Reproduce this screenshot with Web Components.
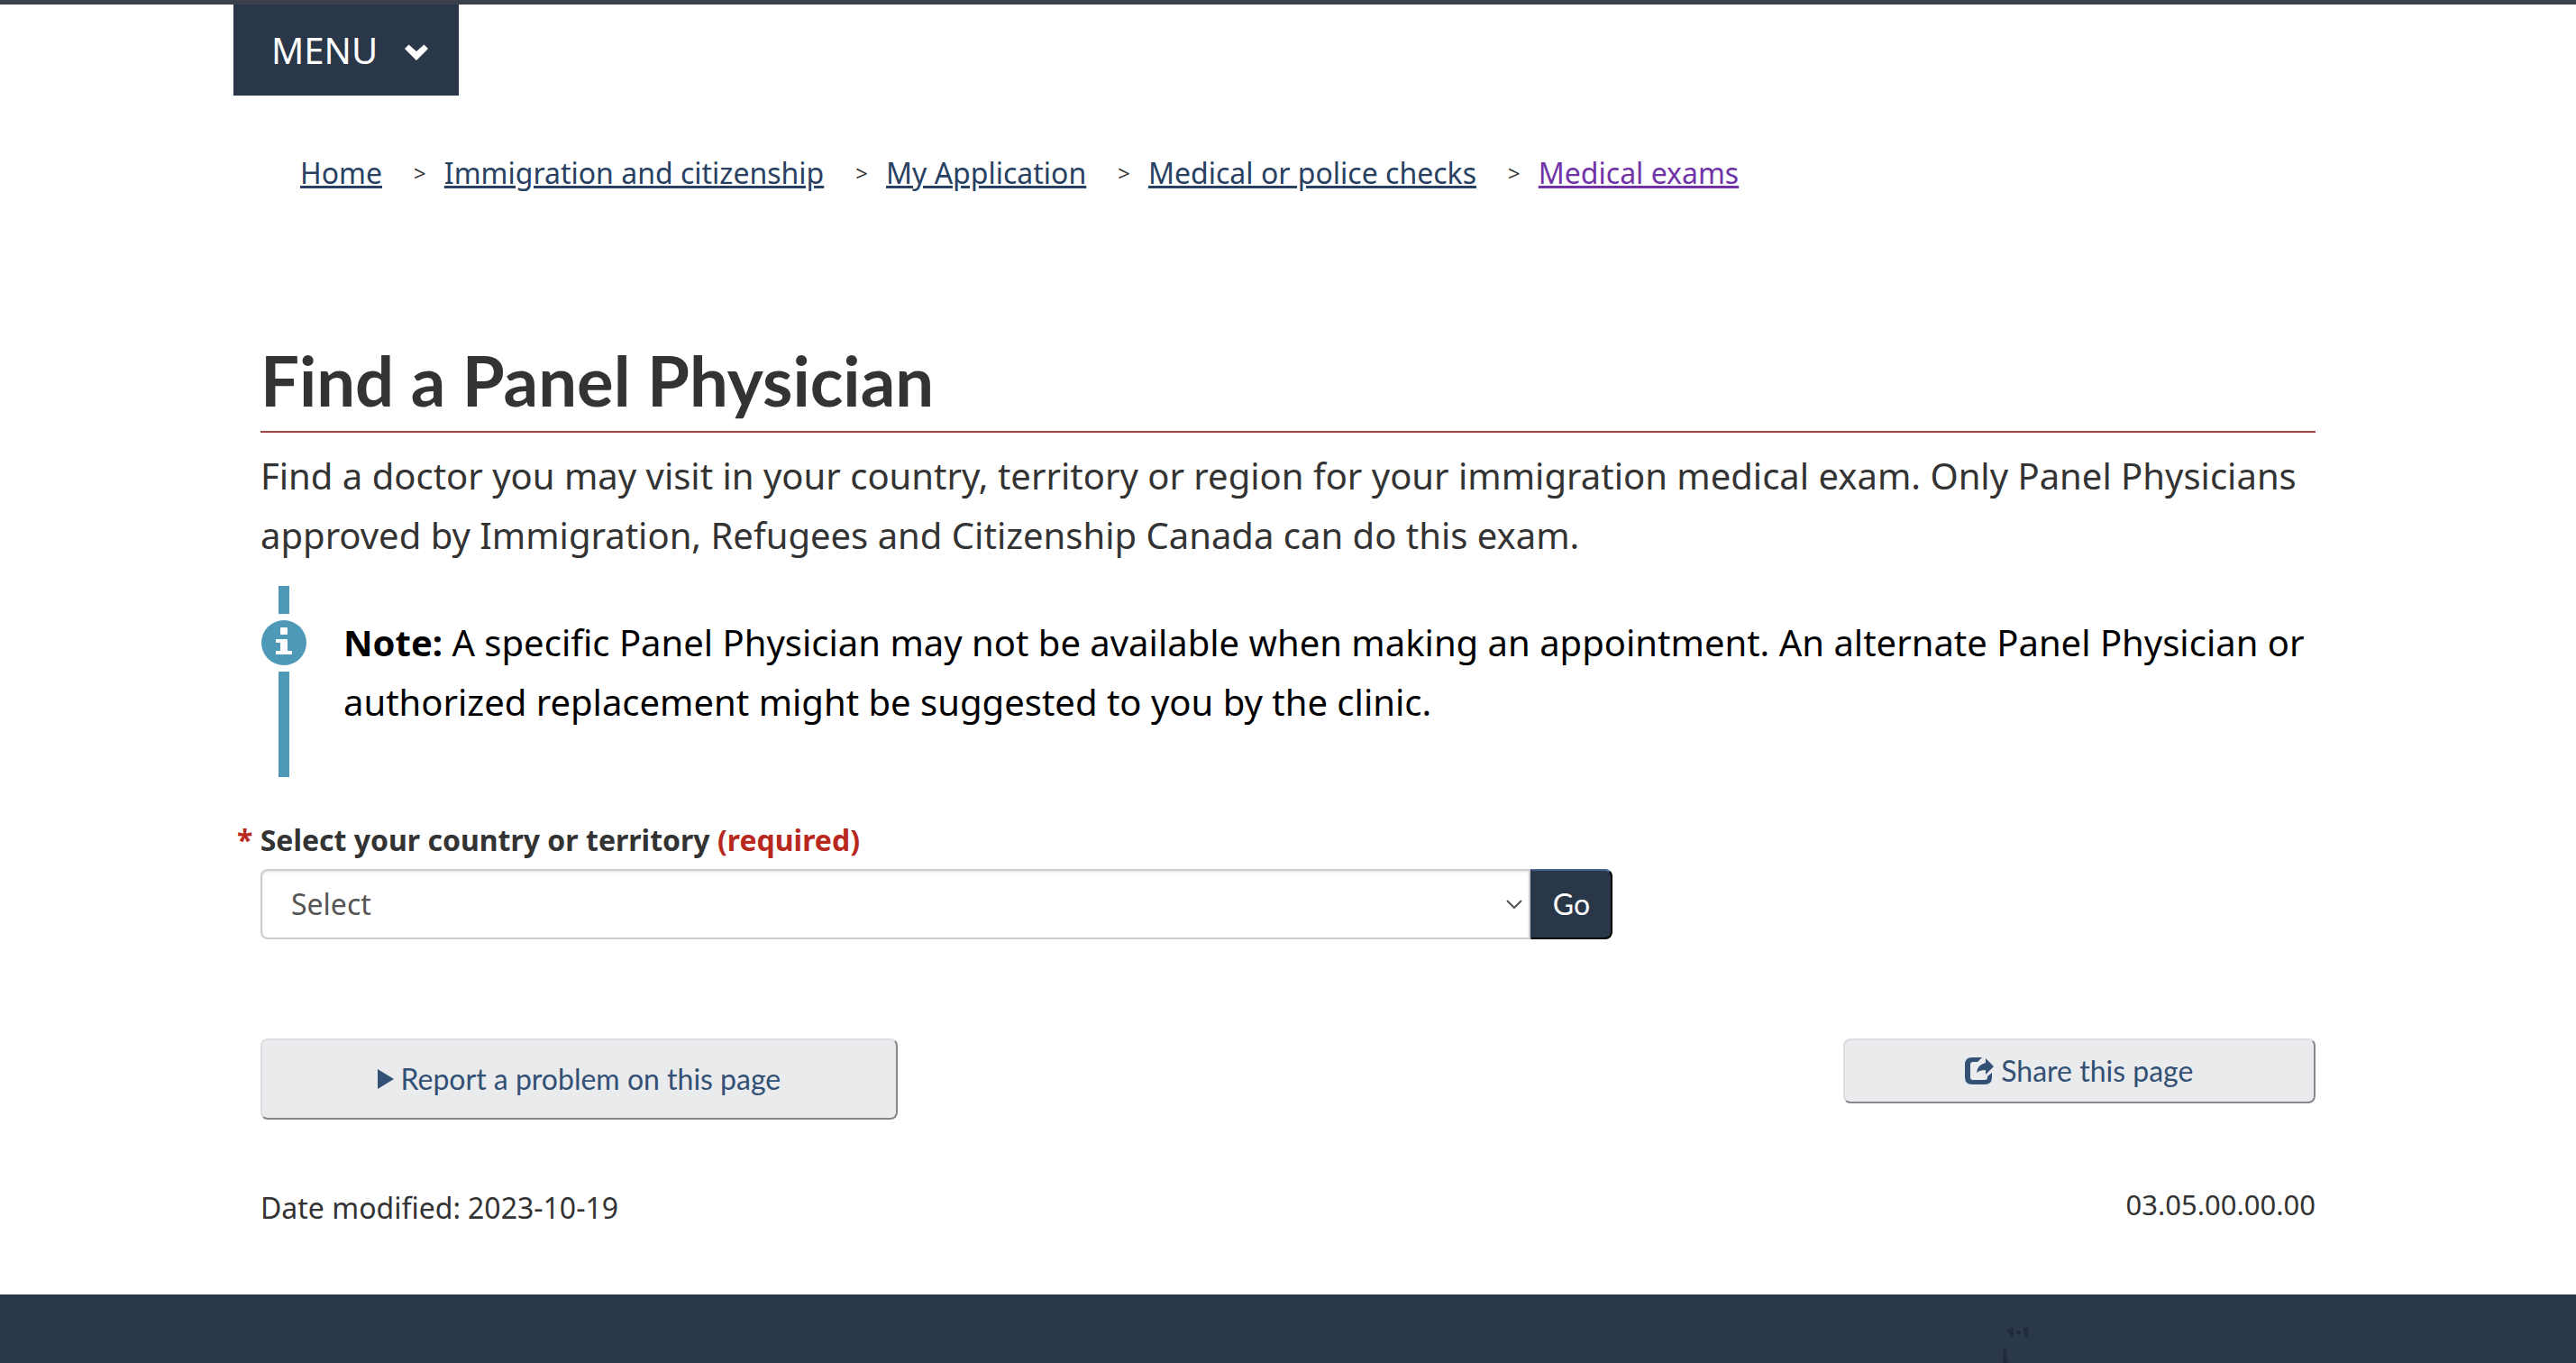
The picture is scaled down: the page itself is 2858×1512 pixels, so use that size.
<!DOCTYPE html>
<html lang="en">
<head>
<meta charset="utf-8">
<title>Find a Panel Physician</title>
<style>
  html { height: 100%; }
  body {
    margin: 0;
    min-height: 100%;
    background: #fff;
    color: #333;
    font: 40px/66px "Noto Sans", sans-serif;
    display: flex;
    flex-direction: column;
    overflow-x: hidden;
  }
</style>
</head>
<body>
<site-menu>MENU</site-menu>
<bread-crumbs>
  <crumb-item>Home</crumb-item>
  <crumb-item>Immigration and citizenship</crumb-item>
  <crumb-item>My Application</crumb-item>
  <crumb-item>Medical or police checks</crumb-item>
  <crumb-item visited>Medical exams</crumb-item>
</bread-crumbs>
<page-main>
  <page-title>Find a Panel Physician</page-title>
  <lead-text>Find a doctor you may visit in your country, territory or region for your immigration medical exam. Only Panel Physicians approved by Immigration, Refugees and Citizenship Canada can do this exam.</lead-text>
  <info-note><strong>Note:</strong> A specific Panel Physician may not be available when making an appointment. An alternate Panel Physician or authorized replacement might be suggested to you by the clinic.</info-note>
  <country-form></country-form>
  <page-details></page-details>
</page-main>
<site-footer></site-footer>

<script>
const define = (name, html) => {
  const template = document.createElement('template');
  template.innerHTML = '<style>*{box-sizing:border-box}</style>' + html;
  customElements.define(name, class extends HTMLElement {
    constructor() {
      super();
      this.attachShadow({ mode: 'open' }).append(template.content.cloneNode(true));
    }
  });
};

define('site-menu', `
  <style>
    :host { display: block; border-top: 5px solid #3c404b; }
    nav { max-width: 2340px; margin: 0 auto; }
    button {
      display: flex; align-items: center; gap: 30px;
      height: 101px; padding: 0 34px 0 42px;
      border: 0; background: #2a3748; color: #fff;
      font: 40px/66px "Noto Sans", sans-serif;
    }
    svg { width: 26px; height: 18px; margin-top: 4px; }
  </style>
  <nav aria-label="Main">
    <button type="button" aria-haspopup="true"><slot></slot>
      <svg viewBox="0 0 26 18" aria-hidden="true"><path fill="#fff" d="M4.500 0.500 13 8 21.500 0.500 26 5 13 18 0 5z"/></svg>
    </button>
  </nav>`);

define('bread-crumbs', `
  <style>
    :host { display: block; }
    nav {
      display: flex; flex-wrap: wrap; align-items: center;
      max-width: 2340px; margin: 0 auto; padding: 58px 74px 0;
    }
  </style>
  <nav aria-label="Breadcrumb"><slot></slot></nav>`);

define('crumb-item', `
  <style>
    :host { display: flex; align-items: center; font-size: 32px; line-height: 56px; }
    a { color: #284162; text-decoration: underline; }
    :host([visited]) a { color: #7034a8; }
    span { font-size: 24px; padding: 0 20px 0 35px; }
    :host(:first-child) span { display: none; }
  </style>
  <span aria-hidden="true">&gt;</span><a href="#"><slot></slot></a>`);

define('page-main', `
  <style>
    :host { display: block; }
    main { max-width: 2340px; margin: 0 auto; padding: 156px 30px 70px; }
  </style>
  <main><slot></slot></main>`);

define('page-title', `
  <style>
    :host { display: block; }
    h1 {
      margin: 0 0 15px; padding-bottom: 10px;
      border-bottom: 2px solid #9c4547;
      font: 700 76px/92px Lato, sans-serif;
    }
  </style>
  <h1><slot></slot></h1>`);

define('lead-text', `
  <style>
    :host { display: block; }
    p { margin: 0; }
  </style>
  <p><slot></slot></p>`);

define('info-note', `
  <style>
    :host { display: flex; gap: 40px; margin-top: 23px; color: #000; }
    .rail { display: flex; flex-direction: column; align-items: center; gap: 7px; flex: none; width: 52px; }
    .rail i { width: 12px; height: 31px; background: #4e98b8; }
    .rail i:last-child { height: auto; flex: 1; }
    svg { width: 50px; height: 50px; flex: none; }
    p { margin: 0; padding: 30px 0 50px; }
  </style>
  <div class="rail"><i></i>
    <svg viewBox="0 0 50 50" aria-hidden="true"><circle cx="25" cy="25" r="25" fill="#4e98b8"/><path fill="#fff" d="M22 8h6q1 0 1 1v6q0 1-1 1h-6q-1 0-1-1V9q0-1 1-1zM17 21h11q1 0 1 1v12h4q1 0 1 1v3H17q-1 0-1-1v-3h5v-9h-4q-1 0-1-1v-2q0-1 1-1z"/></svg>
  <i></i></div>
  <p><slot></slot></p>`);

define('country-form', `
  <style>
    :host { display: block; margin-top: 44px; }
    label { display: block; margin-left: -26px; font-size: 32px; font-weight: 700; line-height: 52px; }
    .req { color: #b9281e; }
    .group { display: flex; width: 1500px; max-width: 100%; height: 78px; margin-top: 6px; }
    .field { display: grid; flex: 1; align-items: center; }
    .field > * { grid-area: 1 / 1; }
    select {
      appearance: none; width: 100%; height: 78px; padding: 0 32px;
      border: 2px solid #ccc; border-radius: 8px 0 0 8px; background: #fff;
      box-shadow: inset 0 2px 2px rgba(0,0,0,.08);
      color: #555; font: 32px/52px "Noto Sans", sans-serif;
    }
    svg { justify-self: end; width: 18px; height: 11px; margin-right: 9px; pointer-events: none; }
    button {
      width: 91px; padding: 0; border: 2px solid #000; border-top-color: #486591; border-left-color: #2a3748;
      border-radius: 0 8px 8px 0; background: #2a3748; color: #fff;
      font: 32px/52px Lato, sans-serif;
    }
  </style>
  <form>
    <label for="country"><span class="req">*</span> Select your country or territory <span class="req">(required)</span></label>
    <div class="group">
      <div class="field">
        <select id="country" required><option>Select</option></select>
        <svg viewBox="0 0 18 11" aria-hidden="true"><path d="M1 1l8 8 8-8" fill="none" stroke="#555" stroke-width="2"/></svg>
      </div>
      <button type="button">Go</button>
    </div>
  </form>`);

define('page-details', `
  <style>
    :host { display: block; margin-top: 110px; font-size: 32px; line-height: 52px; }
    .row { display: flex; justify-content: space-between; align-items: flex-start; }
    .row + .row { margin-top: 68px; }
    button {
      display: flex; align-items: center; justify-content: center; gap: 8px;
      border: 2px solid #dcdee1; border-right-color: #85878a; border-bottom-color: #85878a;
      border-radius: 8px; background: #e9ebed; color: #335075;
      font: 32px/52px Lato, sans-serif;
    }
    .report { width: 31%; height: 90px; }
    .share { width: 23%; height: 72px; }
    .report svg { width: 18px; height: 22px; }
    .share svg { width: 32px; height: 30px; }
    dl { display: flex; gap: 8px; margin: 4px 0 0; }
    dd { margin: 0; }
    .version { font-size: 31px; }
  </style>
  <div class="row">
    <button type="button" class="report"><svg viewBox="0 0 18 22" aria-hidden="true"><path fill="#335075" d="M0 0l18 11L0 22z"/></svg>Report a problem on this page</button>
    <button type="button" class="share"><svg viewBox="0 0 32 30" aria-hidden="true"><path fill="#335075" d="M19 0 14 5H9Q6 5 6 8v14q0 3 3 3h13q3 0 3-3v-1l5-4v5q0 8-8 8H8q-8 0-8-8V8q0-8 8-8zM23 1l9 9-9 9v-5q-7 0-10 3 1-9 10-11z"/></svg>Share this page</button>
  </div>
  <div class="row">
    <dl><dt>Date modified:</dt><dd><time>2023-10-19</time></dd></dl>
    <span class="version">03.05.00.00.00</span>
  </div>`);

define('site-footer', `
  <style>
    :host { display: flex; flex: 1; min-height: 76px; background: #2b374a; border-bottom: 1px solid #33304a; }
    footer { display: flex; flex: 1; justify-content: flex-end; align-items: flex-end; max-width: 2340px; margin: 0 auto; padding-right: 344px; }
    svg { width: 34px; height: 40px; }
  </style>
  <footer>
    <svg viewBox="0 0 34 40" aria-hidden="true"><g fill="#1c2737" fill-opacity=".7"><path d="M5 2h3v4H6zM9 1h4v10h-3L8 6zM16 4h5v4h-5zM24 1h5l1 3-2 2 2 2-1 3h-3l-2-4z"/><path d="M2 25h4l-1 7 2 8H1z"/></g></svg>
  </footer>`);
</script>
</body>
</html>
